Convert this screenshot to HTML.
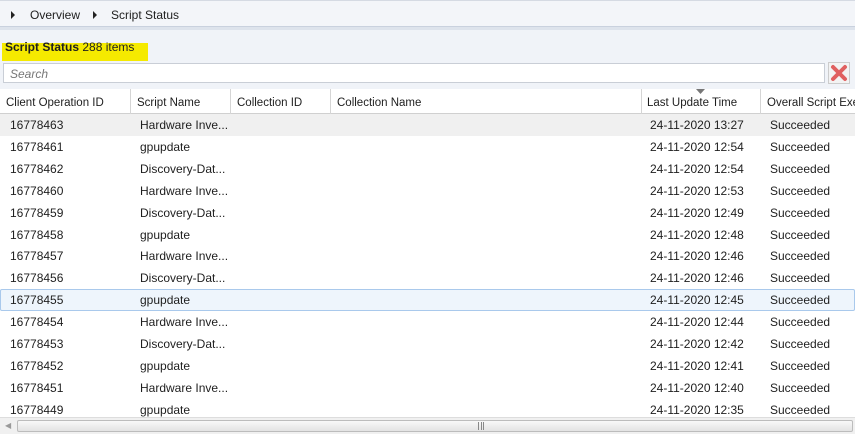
<!DOCTYPE html>
<html><head><meta charset="utf-8"><style>
*{margin:0;padding:0;box-sizing:border-box}
body{width:855px;height:434px;overflow:hidden;background:#fff;font-family:"Liberation Sans",sans-serif;font-size:12px;color:#1e1e1e;position:relative}
.bc{position:absolute;left:0;top:0;width:855px;height:27px;background:#f3f5f9;border-top:1px solid #d5dae3;border-bottom:1px solid #c9d1de}
.bc span{position:absolute;top:7px}
.tri{width:0;height:0;border-left:4px solid #222;border-top:4px solid transparent;border-bottom:4px solid transparent;position:absolute;top:10px}
.pane{position:absolute;left:0;top:27px;width:855px;height:62px;background:#f0f3f8;border-top:3px solid #dde3ec}
.hl{position:absolute;left:2px;top:43px;width:146px;height:18px;background:#f5ea00}
.title{position:absolute;left:5px;top:40px;font-size:12px}
.search{position:absolute;left:3px;top:63px;width:822px;height:20px;background:#fff;border:1px solid #c9ced6}
.search span{position:absolute;left:6px;top:3px;color:#777;font-style:italic}
.xbtn{position:absolute;left:828px;top:62px;width:22px;height:22px;border:1px solid #ccc;background:#f3f3f3}
.hdr{position:absolute;left:0;top:89px;width:855px;height:25px;background:#fff;border-bottom:1px solid #d0d0d0}
.hdr div{position:absolute;top:0;height:25px;border-right:1px solid #d5d5d5;padding:8px 0 0 6px;white-space:nowrap;overflow:hidden;font-size:11.5px}
.row{position:absolute;left:0;width:855px;height:22px}
.row span{position:absolute;top:4px;white-space:nowrap}
.sb{position:absolute;left:0;top:417px;width:855px;height:17px;background:#f0f0f0;border-top:1px solid #ddd}
.thumb{position:absolute;left:17px;top:2px;width:836px;height:12px;background:linear-gradient(#f8f8f8,#e3e3e3);border:1px solid #bcbcbc;border-radius:2px}
</style></head><body>
<div class="bc"><div class="tri" style="left:11px"></div><span style="left:30px">Overview</span><div class="tri" style="left:93px"></div><span style="left:111px">Script Status</span></div>
<div class="pane"></div>
<div class="hl"></div>
<div class="title"><span style="font-weight:600">Script Status</span> 288 items</div>
<div class="search"><span>Search</span></div>
<div class="xbtn"><svg width="20" height="20" viewBox="0 0 20 20"><path d="M4 4L16 16M16 4L4 16" stroke="#e06060" stroke-width="4" stroke-linecap="round"/></svg></div>
<div class="hdr">
<div style="left:0;width:131px">Client Operation ID</div>
<div style="left:131px;width:100px">Script Name</div>
<div style="left:231px;width:100px">Collection ID</div>
<div style="left:331px;width:311px">Collection Name</div>
<div style="left:642px;width:119px;padding-left:5px">Last Update Time</div>
<div style="left:761px;width:100px;border:none">Overall Script Execution</div>
</div>
<svg style="position:absolute;left:696px;top:89px" width="9" height="5"><path d="M0 0H9L4.5 5Z" fill="#777"/></svg>
<div id="rows"></div>
<div class="sb"><div style="position:absolute;left:5px;top:3px;font-size:8px;color:#999">&#9664;</div><div class="thumb"><div style="position:absolute;left:460px;top:1px;width:6px;height:8px;border-left:1px solid #888;border-right:1px solid #888"><div style="margin-left:2px;width:1px;height:8px;background:#888"></div></div></div></div>
<script>
var d=[["16778463","Hardware Inve...","13:27"],["16778461","gpupdate","12:54"],["16778462","Discovery-Dat...","12:54"],["16778460","Hardware Inve...","12:53"],["16778459","Discovery-Dat...","12:49"],["16778458","gpupdate","12:48"],["16778457","Hardware Inve...","12:46"],["16778456","Discovery-Dat...","12:46"],["16778455","gpupdate","12:45"],["16778454","Hardware Inve...","12:44"],["16778453","Discovery-Dat...","12:42"],["16778452","gpupdate","12:41"],["16778451","Hardware Inve...","12:40"],["16778449","gpupdate","12:35"]];
var h="";d.forEach(function(r,i){var st="top:"+(114+i*21.9)+"px;";
if(i==0)st+="background:#f0f0f0;";
if(i==8)st+="background:#eef5fc;box-shadow:inset 0 0 0 1px #a9c9ec;border-radius:2px;";
h+='<div class="row" style="'+st+'"><span style="left:10px">'+r[0]+'</span><span style="left:140px">'+r[1]+'</span><span style="left:650px">24-11-2020 '+r[2]+'</span><span style="left:770px">Succeeded</span></div>';});
document.getElementById("rows").innerHTML=h;
</script>
</body></html>
